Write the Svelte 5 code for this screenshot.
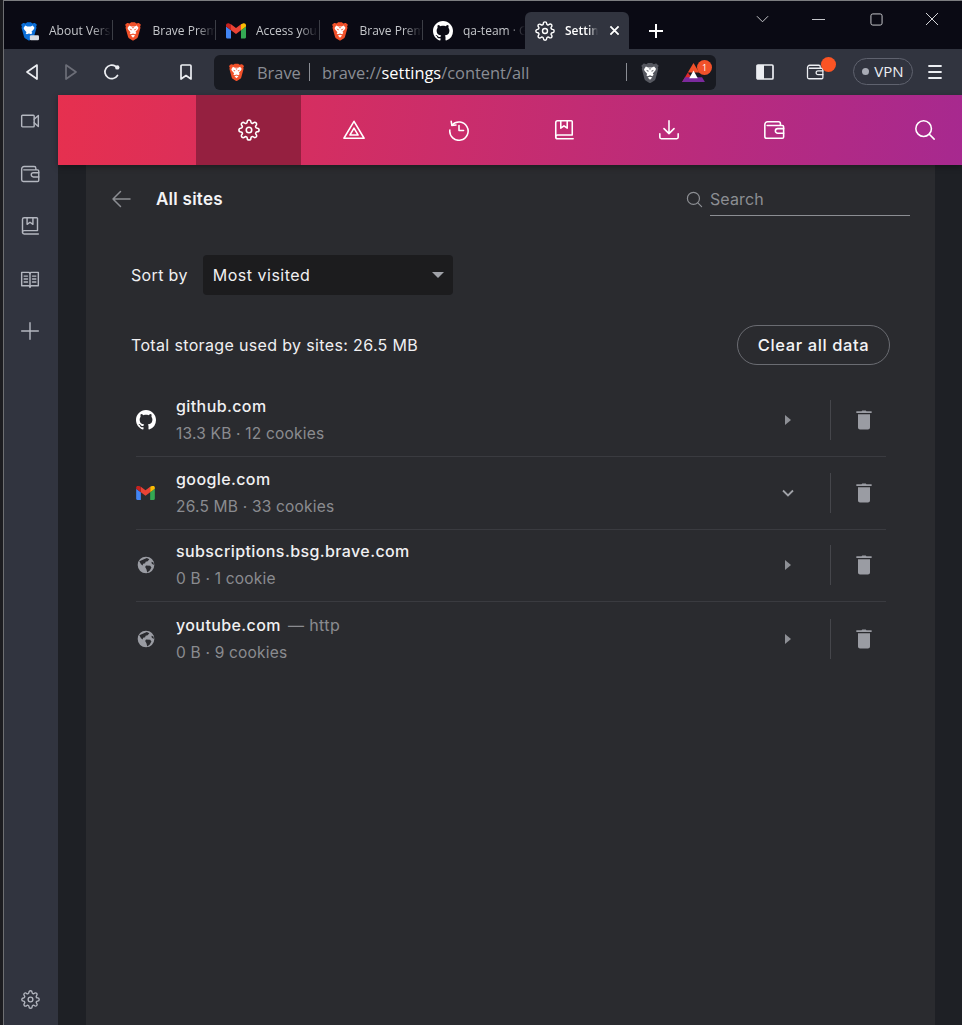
<script>
  const tabs = [
    { id: 'about', title: 'About Version', icon: 'nightly' },
    { id: 'prem1', title: 'Brave Premium', icon: 'brave' },
    { id: 'gmail', title: 'Access your', icon: 'gmail' },
    { id: 'prem2', title: 'Brave Premium', icon: 'brave' },
    { id: 'qa', title: 'qa-team · GitHub', icon: 'github' }
  ];

  const navItems = ['gear', 'rewards', 'history', 'book', 'download', 'wallet'];
  const sideItems = ['video', 'wallet', 'book', 'reading', 'plus'];

  const sites = [
    { name: 'github.com', meta: '13.3 KB · 12 cookies', icon: 'github' },
    { name: 'google.com', meta: '26.5 MB · 33 cookies', icon: 'gmail', open: true },
    { name: 'subscriptions.bsg.brave.com', meta: '0 B · 1 cookie', icon: 'globe' },
    { name: 'youtube.com', scheme: 'http', meta: '0 B · 9 cookies', icon: 'globe' }
  ];
</script>

{#snippet icon(name)}
  {#if name === 'gear'}
    <svg viewBox="0 0 24 24" class="line">
      <circle cx="12" cy="12" r="3" />
      <path d="M19.4 15a1.65 1.65 0 0 0 .33 1.82l.06.06a2 2 0 0 1 0 2.83 2 2 0 0 1-2.83 0l-.06-.06a1.65 1.65 0 0 0-1.82-.33 1.65 1.65 0 0 0-1 1.51V21a2 2 0 0 1-2 2 2 2 0 0 1-2-2v-.09A1.65 1.65 0 0 0 9 19.4a1.65 1.65 0 0 0-1.82.33l-.06.06a2 2 0 0 1-2.83 0 2 2 0 0 1 0-2.83l.06-.06a1.65 1.65 0 0 0 .33-1.82 1.65 1.65 0 0 0-1.51-1H3a2 2 0 0 1-2-2 2 2 0 0 1 2-2h.09A1.65 1.65 0 0 0 4.6 9a1.65 1.65 0 0 0-.33-1.82l-.06-.06a2 2 0 0 1 0-2.83 2 2 0 0 1 2.83 0l.06.06a1.65 1.65 0 0 0 1.82.33H9a1.65 1.65 0 0 0 1-1.51V3a2 2 0 0 1 2-2 2 2 0 0 1 2 2v.09a1.65 1.65 0 0 0 1 1.51 1.65 1.65 0 0 0 1.82-.33l.06-.06a2 2 0 0 1 2.83 0 2 2 0 0 1 0 2.83l-.06.06a1.65 1.65 0 0 0-.33 1.82V9a1.65 1.65 0 0 0 1.51 1H21a2 2 0 0 1 2 2 2 2 0 0 1-2 2h-.09a1.65 1.65 0 0 0-1.51 1z" />
    </svg>
  {:else if name === 'rewards'}
    <svg viewBox="0 0 24 24" class="line">
      <path d="M12 2.500 23 21H1z" />
      <path d="M12 10 16.500 17.500H7.500z" />
    </svg>
  {:else if name === 'history'}
    <svg viewBox="0 0 24 24" class="line">
      <path d="M4.500 6.500A10 10 0 1 1 2 12" />
      <path d="M3.500 2.500 4.200 7l4.500-.4" />
      <path d="M12 7v5.500h5" />
    </svg>
  {:else if name === 'book'}
    <svg viewBox="0 0 24 24" class="line">
      <path d="M21 17.500H5a2 2 0 0 0-2 2V4a2 2 0 0 1 2-2h15a1 1 0 0 1 1 1z" />
      <path d="M3 19.500a2 2 0 0 0 2 2h17" />
      <path d="M8.500 2v8l3.500-2.500 3.500 2.500V2" />
    </svg>
  {:else if name === 'download'}
    <svg viewBox="0 0 24 24" class="line">
      <path d="M12 2v14M6.500 10.500 12 16l5.500-5.500" />
      <path d="M2 16v4a1.500 1.500 0 0 0 1.500 1.500h17A1.500 1.500 0 0 0 22 20v-4" />
    </svg>
  {:else if name === 'wallet'}
    <svg viewBox="0 0 24 24" class="line">
      <path d="M19 7V5a2 2 0 0 0-2-2H5a3 3 0 0 0-3 3v13a2 2 0 0 0 2 2h17a1.500 1.500 0 0 0 1.500-1.500V8.500A1.500 1.500 0 0 0 21 7H4.500" />
      <path d="M22.500 10.500H16a2.500 2.500 0 0 0 0 5h6.500" />
    </svg>
  {:else if name === 'search'}
    <svg viewBox="0 0 24 24" class="line">
      <circle cx="10.500" cy="10.500" r="8.500" />
      <path d="M16.700 16.700 22 22" />
    </svg>
  {:else if name === 'video'}
    <svg viewBox="0 0 24 24" class="line">
      <path d="M3 5h13a1 1 0 0 1 1 1v12a1 1 0 0 1-1 1H3a1 1 0 0 1-1-1V6a1 1 0 0 1 1-1z" />
      <path d="M17 10 22 5.500v13L17 14" />
    </svg>
  {:else if name === 'reading'}
    <svg viewBox="0 0 24 24" class="line">
      <path d="M12 5.500 11 4H2v16h9l1 2 1-2h9V4h-9z" />
      <path d="M12 5.500V20M5 8.500h4M5 12h4M5 15.500h4M15 8.500h4M15 12h4M15 15.500h4" />
    </svg>
  {:else if name === 'plus'}
    <svg viewBox="0 0 24 24" class="line">
      <path d="M12 2v20M2 12h20" />
    </svg>
  {:else if name === 'brave'}
    <svg viewBox="0 0 24 24">
      <path fill="#f1512a" d="M20.500 6.500 21.500 4.500 19.400 2.600c-.3-.3-.7-.4-1.100-.3L16 2.900 14.200 1.500H9.800L8 2.900 5.700 2.300c-.4-.1-.8 0-1.100.3L2.500 4.500l1 2L3 8l3 11c.2.700.5 1.200 1.100 1.600L11 23.200c.6.400 1.400.4 2 0l3.900-2.600c.6-.4.900-.9 1.100-1.600l3-11z" />
      <path fill="#fff" d="M7.500 5.500 10 6.500h4l2.500-1 2 2.500-.5 1.500-3 3.500 1 1.500-1.500 1.500-2.500-1-2.500 1L8 15l1-1.500-3-3.500-.5-1.500z" />
      <path fill="#f1512a" d="M7.500 9 10.500 10 10 11.500zM16.500 9 13.500 10 14 11.500zM10.500 7.500h3L12 9z" />
      <path fill="#fff" d="M9.500 17.500 12 16.500l2.500 1L12 20z" />
    </svg>
  {:else if name === 'lion'}
    <svg viewBox="0 0 24 24">
      <path fill="#565860" d="M20.500 6.500 21.500 4.500 19.400 2.600c-.3-.3-.7-.4-1.100-.3L16 2.900 14.200 1.500H9.800L8 2.900 5.700 2.300c-.4-.1-.8 0-1.100.3L2.500 4.500l1 2L3 8l3 11c.2.700.5 1.200 1.100 1.600L11 23.200c.6.400 1.400.4 2 0l3.900-2.600c.6-.4.900-.9 1.100-1.600l3-11z" />
      <path fill="#fff" d="M7.500 5.500 10 6.500h4l2.500-1 2 2.500-.5 1.500-3 3.500 1 1.500-1.500 1.500-2.500-1-2.500 1L8 15l1-1.500-3-3.500-.5-1.500z" />
      <path fill="#565860" d="M7.500 9 10.500 10 10 11.500zM16.500 9 13.500 10 14 11.500zM10.500 7.500h3L12 9z" />
      <path fill="#fff" d="M9.500 17.500 12 16.500l2.500 1L12 20z" />
    </svg>
  {:else if name === 'nightly'}
    <svg viewBox="0 0 24 24">
      <path fill="#0b6fd8" d="M20.500 6.500 21.500 4.500 19.400 2.600c-.3-.3-.7-.4-1.100-.3L16 2.900 14.200 1.500H9.800L8 2.900 5.700 2.300c-.4-.1-.8 0-1.100.3L2.500 4.500l1 2L3 8l3 11c.2.700.5 1.200 1.100 1.600L11 23.200c.6.400 1.400.4 2 0l3.900-2.600c.6-.4.900-.9 1.100-1.600l3-11z" />
      <path fill="#fff" d="M7.500 5.500 10 6.500h4l2.500-1 2 2.500-.5 1.500-3 3.500 1 1.500-1.500 1.500-2.500-1-2.500 1L8 15l1-1.500-3-3.500-.5-1.500z" />
      <rect x="13" y="17" width="11" height="6" rx="1.500" fill="#d8dce2" />
    </svg>
  {:else if name === 'gmail'}
    <svg viewBox="0 0 24 18">
      <path fill="#4285f4" d="M0 16.500C0 17.300.7 18 1.500 18H6V8L0 3.500z" />
      <path fill="#34a853" d="M18 18h4.500c.8 0 1.500-.7 1.500-1.500v-13L18 8z" />
      <path fill="#fbbc04" d="M18 1v7l6-4.500V2c0-2-2.300-3-3.800-1.900z" />
      <path fill="#ea4335" d="M6 8V1l6 4.500L18 1v7l-6 4.500z" />
      <path fill="#c5221f" d="M0 2v1.500L6 8V1L3.800.1C2.300-1 0 0 0 2z" />
    </svg>
  {:else if name === 'github'}
    <svg viewBox="0 0 16 16">
      <path fill="#fff" d="M8 0C3.580 0 0 3.580 0 8c0 3.540 2.290 6.530 5.470 7.590.4.070.55-.17.55-.38 0-.19-.01-.82-.01-1.490-2.010.37-2.530-.49-2.690-.94-.09-.23-.48-.94-.82-1.130-.28-.15-.68-.52-.01-.53.63-.01 1.080.58 1.230.82.72 1.210 1.870.87 2.330.66.07-.52.28-.87.51-1.070-1.780-.2-3.640-.89-3.640-3.950 0-.87.31-1.590.82-2.150-.08-.2-.36-1.020.08-2.120 0 0 .67-.21 2.200.82.64-.18 1.320-.27 2-.27.68 0 1.360.09 2 .27 1.530-1.040 2.200-.82 2.200-.82.44 1.100.16 1.920.08 2.120.51.56.82 1.270.82 2.150 0 3.070-1.870 3.750-3.650 3.950.29.25.54.73.54 1.480 0 1.070-.01 1.930-.01 2.200 0 .21.15.46.55.38A8.013 8.013 0 0016 8c0-4.420-3.580-8-8-8z" />
    </svg>
  {:else if name === 'globe'}
    <svg viewBox="0 0 24 24">
      <circle cx="12" cy="12" r="10" fill="#9a9ca3" />
      <path fill="#2a2b2f" d="M4 7.500 9.500 5 13 3.500l3 1.500-2 2.500-2.500.5-.5 2-2.500.5-.5 2-2-1.500zM12 12.500l5 .5 1.500 2-2 3.500-3 2.500-1-4-1.500-2.500zM18.500 8l2.500 1 .5 3-2.500-1.500z" />
    </svg>
  {:else if name === 'trash'}
    <svg viewBox="0 0 16 20">
      <path fill="#9a9ca3" d="M5.500 1.200 6.300.4h3.400l.8.8H15a.7.7 0 0 1 0 1.800H1a.7.7 0 0 1 0-1.800zM2 4.200h12v13.300c0 1.100-.9 2-2 2H4c-1.100 0-2-.9-2-2z" />
    </svg>
  {/if}
{/snippet}

<div class="window">
  <header class="tabstrip">
    {#each tabs as tab (tab.id)}
      <div class="tab">
        <span class="tab-icon">{@render icon(tab.icon)}</span>
        <span class="tab-title">{tab.title}</span>
      </div>
    {/each}
    <div class="tab active">
      <span class="tab-icon gear">{@render icon('gear')}</span>
      <span class="tab-title">Settings</span>
      <svg class="tab-close" viewBox="0 0 12 12"><path d="M1.500 1.500l9 9M10.500 1.500l-9 9" /></svg>
    </div>
    <svg class="new-tab" viewBox="0 0 16 16"><path d="M8 1v14M1 8h14" /></svg>
    <div class="controls">
      <svg viewBox="0 0 14 8" class="ctl chev"><path d="M1 1l6 6 6-6" /></svg>
      <svg viewBox="0 0 14 14" class="ctl min"><path d="M0 7h14" /></svg>
      <svg viewBox="0 0 14 14" class="ctl max"><rect x="1" y="1" width="12" height="12" rx="2" /></svg>
      <svg viewBox="0 0 14 14" class="ctl cls"><path d="M1 1l12 12M13 1L1 13" /></svg>
    </div>
  </header>

  <div class="toolbar">
    <svg class="tb back" viewBox="0 0 14 18"><path d="M12 2 2 9l10 7z" /></svg>
    <svg class="tb fwd" viewBox="0 0 14 18"><path d="M2 2l10 7-10 7z" /></svg>
    <svg class="tb reload" viewBox="0 0 18 18">
      <path d="M14.500 12.500A6.800 6.800 0 1 1 12.500 3.200" />
      <circle cx="14.300" cy="4.400" r="2.200" />
    </svg>
    <svg class="tb mark" viewBox="0 0 14 18"><path d="M2 3a1 1 0 0 1 1-1h8a1 1 0 0 1 1 1v13l-5-3.500L2 16z" /></svg>
    <div class="omnibox">
      <span class="omni-shield">{@render icon('brave')}</span>
      <span class="omni-label">Brave</span>
      <span class="omni-sep"></span>
      <span class="omni-url">brave://<b>settings</b>/content/all</span>
      <span class="omni-sep right"></span>
      <span class="omni-lion">{@render icon('lion')}</span>
      <span class="bat">
        <svg viewBox="0 0 24 20">
          <path fill="#f1512a" d="M12 0 18 10H6z" />
          <path fill="#e0282e" d="M6 10 0 20h5l4-6z" />
          <path fill="#7b2a9e" d="M0 20h24l-3-5H3z" />
          <path fill="#fff" d="M12 8 16.500 16h-9z" />
        </svg>
        <span class="bat-badge">1</span>
      </span>
    </div>
    <svg class="tb sidebar-toggle" viewBox="0 0 18 16">
      <rect x="1" y="1" width="16" height="14" rx="1" />
      <rect x="1" y="1" width="7" height="14" class="filled" />
    </svg>
    <span class="tb-wallet">
      {@render icon('wallet')}
      <span class="wallet-dot"></span>
    </span>
    <span class="vpn"><i></i>VPN</span>
    <svg class="tb menu" viewBox="0 0 14 16"><path d="M1 2h12M1 8h12M1 14h12" /></svg>
  </div>

  <div class="body">
    <nav class="sidebar">
      <div class="side-top">
        {#each sideItems as item}
          <span class="side-icon">{@render icon(item)}</span>
        {/each}
      </div>
      <span class="side-icon small">{@render icon('gear')}</span>
    </nav>

    <div class="page">
      <div class="topnav">
        <span></span>
        {#each navItems as item, i}
          <span class="nav-item" class:current={i === 0}>{@render icon(item)}</span>
        {/each}
        <span class="nav-search">{@render icon('search')}</span>
      </div>

      <div class="scroll">
        <main class="panel">
          <div class="head">
            <svg class="arrow" viewBox="0 0 20 18"><path d="M19 9H2M9.500 1.500 2 9l7.500 7.500" /></svg>
            <h1>All sites</h1>
            <div class="search">
              <span class="search-icon">{@render icon('search')}</span>
              <span class="search-input">Search</span>
            </div>
          </div>

          <div class="content">
            <div class="sort">
              <span>Sort by</span>
              <div class="select">Most visited<i></i></div>
            </div>

            <div class="storage">
              <span>Total storage used by sites: 26.5 MB</span>
              <button>Clear all data</button>
            </div>

            <ul class="sites">
              {#each sites as site (site.name)}
                <li>
                  <span class="favicon" class:mail={site.icon === 'gmail'}>{@render icon(site.icon)}</span>
                  <div class="info">
                    <div class="name">{site.name}{#if site.scheme}<span class="scheme">— {site.scheme}</span>{/if}</div>
                    <div class="meta">{site.meta}</div>
                  </div>
                  <span class="expand">
                    {#if site.open}
                      <svg class="chev-down" viewBox="0 0 12 8"><path d="M1 1.500l5 5 5-5" /></svg>
                    {:else}
                      <svg class="caret" viewBox="0 0 6 10"><path d="M0 0l6 5-6 5z" /></svg>
                    {/if}
                  </span>
                  <span class="trash">{@render icon('trash')}</span>
                </li>
              {/each}
            </ul>
          </div>
        </main>
      </div>
    </div>
  </div>
</div>

<style>
  :global(body) {
    margin: 0;
    background: #1c1c20;
  }

  svg {
    display: block;
    width: 100%;
    height: 100%;
  }

  .line {
    fill: none;
    stroke: currentColor;
    stroke-width: 1.7;
    stroke-linecap: round;
    stroke-linejoin: round;
  }

  .window {
    height: 1024px;
    margin-left: 3px;
    border-left: 1px solid #6e6f72;
    border-top: 1px solid #7c7d80;
    display: flex;
    flex-direction: column;
    overflow: hidden;
    font-family: Inter, "Liberation Sans", sans-serif;
  }

  /* tab strip */
  .tabstrip {
    height: 48px;
    flex: none;
    background: #0a0a14;
    display: flex;
    align-items: flex-end;
    padding-left: 5px;
    position: relative;
    font-family: "Open Sans", "Liberation Sans", sans-serif;
    font-size: 12px;
  }

  .tab {
    width: 103.500px;
    height: 37px;
    box-sizing: border-box;
    padding-left: 10px;
    display: flex;
    align-items: center;
    gap: 10px;
    color: #c4c6ca;
    position: relative;
    overflow: hidden;
    flex: none;
  }

  .tab:not(.active)::after {
    content: "";
    position: absolute;
    right: 0;
    top: 8px;
    height: 20px;
    width: 1px;
    background: #3c3e46;
  }

  .tab-icon {
    width: 20px;
    height: 20px;
    flex: none;
    display: flex;
    align-items: center;
  }

  .tab-title {
    white-space: nowrap;
    width: 62px;
    overflow: hidden;
    flex: none;
    -webkit-mask-image: linear-gradient(90deg, #000 70%, transparent 100%);
    mask-image: linear-gradient(90deg, #000 70%, transparent 100%);
  }

  .tab.active {
    width: 104px;
    margin-left: -1.500px;
    background: #31343f;
    border-radius: 6px 6px 0 0;
    color: #fff;
    font-weight: 600;
    padding-left: 10px;
    gap: 10px;
  }

  .tab.active .tab-title {
    width: 33px;
  }

  .tab-close {
    width: 11px;
    height: 11px;
    flex: none;
    margin-left: 1px;
    stroke: #fff;
    stroke-width: 2;
    fill: none;
  }

  .new-tab {
    width: 16px;
    height: 16px;
    margin: 0 0 10px 19px;
    stroke: #fff;
    stroke-width: 2;
    fill: none;
    flex: none;
  }

  .controls {
    position: absolute;
    top: 11px;
    left: 752px;
    display: flex;
    align-items: center;
    height: 14px;
  }

  .ctl {
    fill: none;
    stroke: #d4d5d8;
    stroke-width: 1;
    flex: none;
  }

  .chev { width: 13px; height: 8px; }
  .min { width: 13px; height: 13px; margin-left: 43px; }
  .max { width: 13px; height: 13px; margin-left: 45px; }
  .cls { width: 14px; height: 14px; margin-left: 42px; }

  /* toolbar */
  .toolbar {
    height: 46px;
    flex: none;
    background: #31343f;
    display: flex;
    align-items: center;
    position: relative;
  }

  .tb {
    flex: none;
    fill: none;
    stroke: #eceef2;
    stroke-width: 1.7;
    stroke-linejoin: round;
    stroke-linecap: round;
  }

  .back { width: 14px; height: 18px; margin-left: 21px; }
  .fwd { width: 14px; height: 18px; margin-left: 25px; stroke: #6c6e78; }
  .reload { width: 18px; height: 18px; margin-left: 25px; }
  .reload circle { fill: #eceef2; stroke: none; }
  .mark { width: 14px; height: 18px; margin-left: 58px; }

  .omnibox {
    flex: none;
    width: 502px;
    height: 35px;
    margin-left: 21px;
    background: #181a21;
    border-radius: 6px;
    display: flex;
    align-items: center;
    font-family: "Open Sans", "Liberation Sans", sans-serif;
    font-size: 16.400px;
    color: #8a8d94;
  }

  .omni-shield {
    width: 19px;
    height: 20px;
    margin-left: 13px;
    flex: none;
  }

  .omni-label {
    margin-left: 11px;
    width: 52px;
    flex: none;
  }

  .omni-sep {
    width: 1px;
    height: 18px;
    background: #8a8d94;
    flex: none;
  }

  .omni-url {
    margin-left: 12px;
    width: 304px;
    flex: none;
    white-space: nowrap;
  }

  .omni-url b {
    font-weight: 400;
    color: #fff;
  }

  .omni-lion {
    width: 22px;
    height: 23px;
    margin-left: 12px;
    flex: none;
  }

  .bat {
    position: relative;
    width: 23px;
    height: 19px;
    margin-left: 21px;
    flex: none;
  }

  .bat-badge {
    position: absolute;
    top: -3px;
    right: -7px;
    width: 15px;
    height: 15px;
    border-radius: 50%;
    background: #f1512a;
    color: #fff;
    font-size: 9px;
    line-height: 15px;
    text-align: center;
  }

  .sidebar-toggle {
    width: 18px;
    height: 16px;
    margin-left: 40px;
  }

  .sidebar-toggle .filled {
    fill: #eceef2;
    stroke: none;
  }

  .tb-wallet {
    position: relative;
    width: 20px;
    height: 18px;
    margin-left: 31px;
    color: #eceef2;
    flex: none;
  }

  .wallet-dot {
    position: absolute;
    top: -6px;
    right: -11px;
    width: 15px;
    height: 15px;
    border-radius: 50%;
    background: #fb5424;
  }

  .vpn {
    box-sizing: border-box;
    flex: none;
    width: 60px;
    height: 27px;
    margin-left: 28px;
    margin-top: -2px;
    border: 1px solid #5f626e;
    border-radius: 14px;
    display: flex;
    align-items: center;
    justify-content: center;
    gap: 5px;
    color: #eceef2;
    font-family: "Open Sans", "Liberation Sans", sans-serif;
    font-size: 15px;
  }

  .vpn i {
    width: 7px;
    height: 7px;
    border-radius: 50%;
    background: #a8abb5;
  }

  .menu {
    width: 14px;
    height: 16px;
    margin-left: 15px;
    stroke-width: 1.8;
  }

  /* body */
  .body {
    flex: 1;
    display: flex;
    min-height: 0;
  }

  .sidebar {
    width: 54px;
    flex: none;
    background: #31343f;
    display: flex;
    flex-direction: column;
    justify-content: space-between;
    align-items: center;
    padding: 16px 2px 16px 0;
    box-sizing: border-box;
    color: #b4b7c0;
  }

  .side-top {
    display: flex;
    flex-direction: column;
    align-items: center;
    gap: 32.500px;
  }

  .side-icon {
    width: 20px;
    height: 20px;
    display: block;
  }

  .side-icon.small {
    width: 19px;
    height: 19px;
  }

  .page {
    flex: 1;
    display: flex;
    flex-direction: column;
    min-width: 0;
    background: #1e2025;
  }

  .topnav {
    height: 70px;
    flex: none;
    display: grid;
    grid-template-columns: 138px repeat(6, 105px) 1fr;
    background: linear-gradient(97deg, #e6304f 0%, #a7298f 100%);
    color: #fff;
    position: relative;
    box-shadow: 0 2px 6px rgba(0, 0, 0, 0.35);
  }

  .nav-item {
    display: flex;
    align-items: center;
    justify-content: center;
  }

  .nav-item :global(svg),
  .nav-search :global(svg) {
    width: 22px;
    height: 22px;
  }

  .nav-item.current {
    background: #952040;
  }

  .nav-search {
    display: flex;
    align-items: center;
    justify-content: flex-end;
    padding-right: 26px;
  }

  .scroll {
    flex: 1;
    display: flex;
    padding: 0 27px 0 28px;
    min-height: 0;
  }

  .panel {
    flex: 1;
    background: #2a2b2f;
    color: #f0f0f2;
    font-size: 16px;
    letter-spacing: 0.35px;
  }

  .head {
    height: 68px;
    display: flex;
    align-items: center;
    padding: 0 25px;
  }

  .arrow {
    width: 20px;
    height: 18px;
    fill: none;
    stroke: #8c8e93;
    stroke-width: 1.5;
    stroke-linecap: round;
    stroke-linejoin: round;
    flex: none;
  }

  h1 {
    margin: 0 0 0 25px;
    font-size: 17px;
    font-weight: 600;
    color: #f4f4f6;
    flex: 1;
    letter-spacing: 0.25px;
  }

  .search {
    display: flex;
    align-items: center;
    gap: 7px;
    color: #8c8e93;
    letter-spacing: 0.1px;
  }

  .search-icon {
    width: 17px;
    height: 17px;
    display: block;
  }

  .search-input {
    width: 200px;
    height: 33px;
    line-height: 33px;
    box-sizing: border-box;
    border-bottom: 1px solid #8c8e93;
    margin-top: 1px;
  }

  .content {
    padding: 22px 45px 0;
  }

  .sort {
    display: flex;
    align-items: center;
    gap: 15px;
  }

  .select {
    width: 250px;
    height: 40px;
    box-sizing: border-box;
    padding: 0 16px 0 10px;
    background: #1c1c1e;
    border-radius: 4px;
    display: flex;
    align-items: center;
    justify-content: space-between;
    letter-spacing: 0.5px;
  }

  .select i {
    border-left: 6px solid transparent;
    border-right: 6px solid transparent;
    border-top: 6px solid #a0a2a8;
    margin-right: -7px;
  }

  .storage {
    margin-top: 30px;
    height: 40px;
    display: flex;
    align-items: center;
    justify-content: space-between;
  }

  button {
    width: 153px;
    height: 40px;
    background: transparent;
    border: 1px solid #6a6c72;
    border-radius: 20px;
    color: #f4f4f6;
    font: 500 16.500px Inter, "Liberation Sans", sans-serif;
    letter-spacing: 0.6px;
  }

  .sites {
    list-style: none;
    margin: 19.500px 4px 0 5px;
    padding: 0;
  }

  li {
    height: 72.600px;
    box-sizing: border-box;
    display: flex;
    align-items: center;
    border-bottom: 1px solid #3a3b40;
  }

  li:last-child {
    border-bottom: none;
  }

  .favicon {
    width: 20px;
    height: 20px;
    flex: none;
    display: flex;
    align-items: center;
  }

  .favicon.mail :global(svg) {
    height: 14px;
    width: 19px;
  }

  .info {
    flex: 1;
    margin-left: 20px;
  }

  .name {
    line-height: 26px;
    font-weight: 500;
    font-size: 16px;
    letter-spacing: 0.4px;
  }

  .scheme {
    color: #8a8b90;
    font-weight: 400;
    margin-left: 7px;
  }

  .meta {
    margin-top: 1px;
    line-height: 27px;
    color: #8a8b90;
    font-size: 15.500px;
    letter-spacing: 0.2px;
  }

  .expand {
    width: 43px;
    height: 40px;
    display: flex;
    align-items: center;
    justify-content: center;
    border-right: 1px solid #45464b;
    padding-right: 21px;
    flex: none;
  }

  .caret {
    width: 6px;
    height: 10px;
    fill: #8e9096;
  }

  .chev-down {
    width: 12px;
    height: 8px;
    fill: none;
    stroke: #a0a2a8;
    stroke-width: 1.800;
  }

  .trash {
    width: 16px;
    height: 20px;
    margin: 0 14px 0 25px;
    flex: none;
  }
</style>
